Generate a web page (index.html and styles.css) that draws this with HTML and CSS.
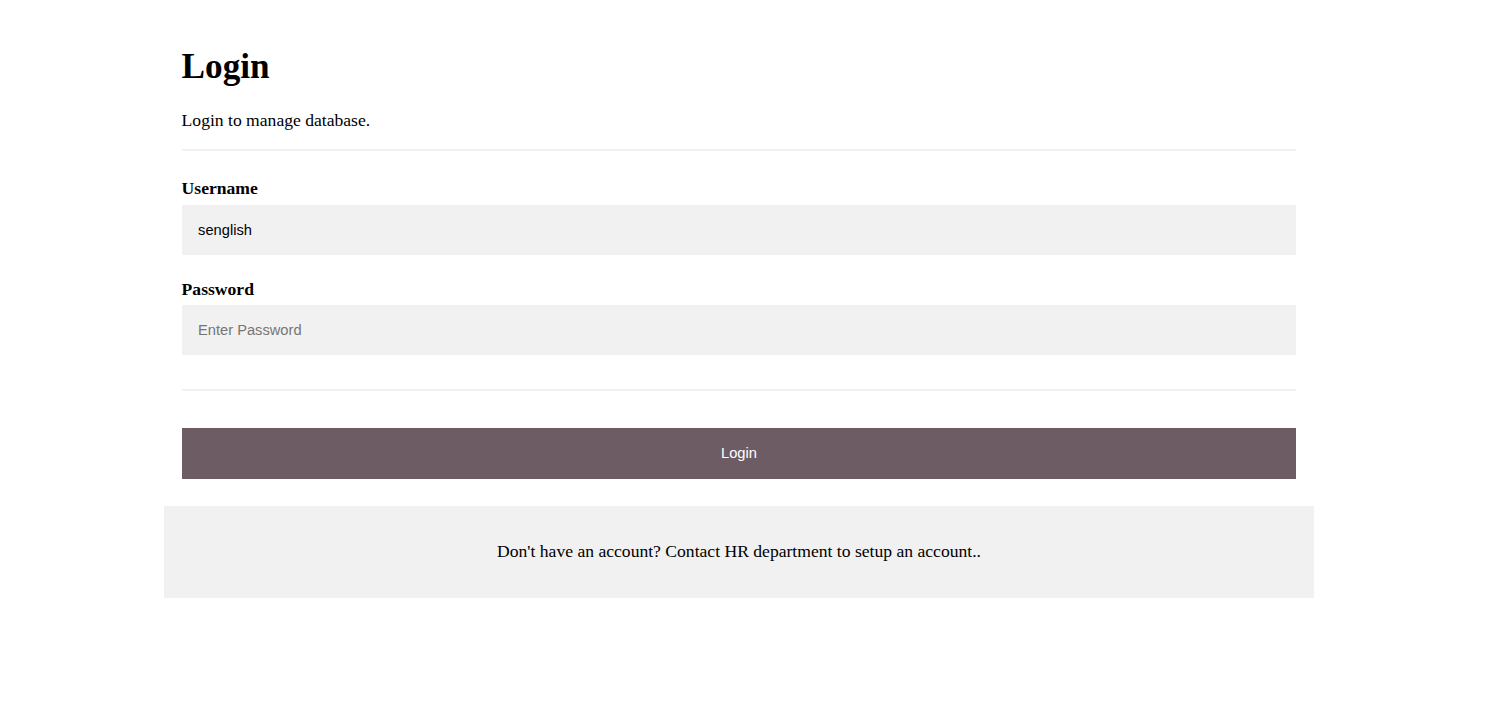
FILE: index.html
```html
<!DOCTYPE html>
<html>
<head>
<meta charset="utf-8">
<title>Login</title>
<link rel="stylesheet" href="styles.css">
</head>
<body>
<form class="login-form">
  <div class="container">
    <h1 class="title">Login</h1>
    <p class="intro">Login to manage database.</p>
    <hr class="rule">
    <label class="field-label" for="uname">Username</label>
    <input class="field" type="text" id="uname" name="uname" value="senglish">
    <label class="field-label" for="psw">Password</label>
    <input class="field" type="password" id="psw" name="psw" placeholder="Enter Password">
    <hr class="rule rule-bottom">
    <button type="button" class="login-btn">Login</button>
  </div>
  <div class="container signin">
    <p class="signin-text">Don't have an account? Contact HR department to setup an account..</p>
  </div>
</form>
</body>
</html>
```

FILE: styles.css
```css
html, body {
  margin: 0;
  padding: 0;
  background: #ffffff;
}
body {
  padding: 8.8px 0;
  font-family: "Liberation Serif", "Times New Roman", serif;
  font-size: 17.6px;
  color: #000;
}
.login-form {
  margin-left: 164px;
  width: 1150px;
}
.container {
  padding: 17.6px;
}
.title {
  font-size: 35.2px;
  font-weight: bold;
  margin: 20.4px 0 23.6px 0;
}
.intro {
  margin: 17.6px 0;
}
.rule {
  border: 1.1px solid #f1f1f1;
  margin: 8.8px 0 27.5px 0;
}
.rule-bottom {
  margin-top: 9.8px;
}
.field-label {
  font-weight: bold;
}
.field {
  box-sizing: border-box;
  width: 100%;
  display: inline-block;
  padding: 17px 16.5px;
  margin: 5.5px 0 24px 0;
  border: none;
  background: #f1f1f1;
  font-family: "Liberation Sans", Arial, sans-serif;
  font-size: 14.67px;
  color: #000;
  outline: none;
}
.field::placeholder {
  color: #757575;
}
.login-btn {
  display: block;
  width: 100%;
  margin: 36.3px 0 9.8px 0;
  padding: 17.6px 22px;
  border: none;
  background: #6e5c64;
  color: #ffffff;
  font-family: "Liberation Sans", Arial, sans-serif;
  font-size: 14.67px;
  cursor: pointer;
}
.signin {
  background: #f1f1f1;
  text-align: center;
}
.signin-text {
  margin: 17.6px 0;
}
```
